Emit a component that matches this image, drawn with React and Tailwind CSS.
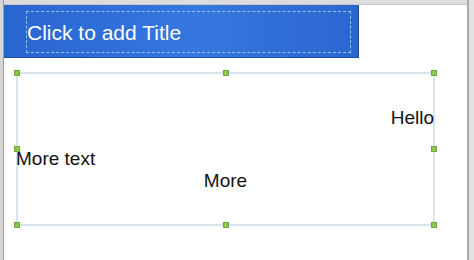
import React from "react";

function Handle({ className }) {
  return (
    <div
      className={`absolute w-[6px] h-[6px] bg-[#8cc84b] border border-[#6fa83a] ${className}`}
    />
  );
}

export default function App() {
  return (
    <div
      className="w-[474px] h-[260px] bg-[#dcdcdc] overflow-hidden flex"
      style={{ fontFamily: '"Liberation Sans", Arial, sans-serif' }}
    >
      <div className="w-[3px] h-full bg-[#d6d6d6]" />
      <div className="w-[1px] h-full bg-[#9a9a9a]" />
      <div className="flex flex-col w-[463px]">
        <div className="h-[5px] bg-[#dcdcdc] border-b border-[#c8c8c8]" />
        <div className="flex-1 bg-white flex flex-col">
          <div className="w-[355px] h-[53px] bg-[linear-gradient(90deg,#2965d0_0%,#3677e0_55%,#2b66cf_100%)] border-r border-b border-[#1e4fa8] pl-[22px] pr-[7px] pt-[6px] pb-[4px]">
            <div className="h-full border border-dashed border-[#9cc0f2] flex items-center pt-[1px]">
              <span className="text-white text-[21px] leading-none">Click to add Title</span>
            </div>
          </div>
          <div className="relative ml-[12px] mt-[14px] w-[419px] h-[154px] border-2 border-[#dae4f1]">
            <div className="flex flex-col h-full pt-[33px] text-[19px] leading-[22px] text-[#111]">
              <div className="text-right -mr-[1px]">Hello</div>
              <div className="mt-[19px] -ml-[2px]">More text</div>
              <div className="text-center">More</div>
            </div>
            <Handle className="-left-[4px] -top-[4px]" />
            <Handle className="left-[205px] -top-[4px]" />
            <Handle className="-right-[4px] -top-[4px]" />
            <Handle className="-left-[4px] top-[72px]" />
            <Handle className="-right-[4px] top-[72px]" />
            <Handle className="-left-[4px] -bottom-[4px]" />
            <Handle className="left-[205px] -bottom-[4px]" />
            <Handle className="-right-[4px] -bottom-[4px]" />
          </div>
        </div>
      </div>
      <div className="w-[2px] h-full bg-[#a8a8a8]" />
      <div className="flex-1 h-full bg-[#e2e2e2]" />
    </div>
  );
}
